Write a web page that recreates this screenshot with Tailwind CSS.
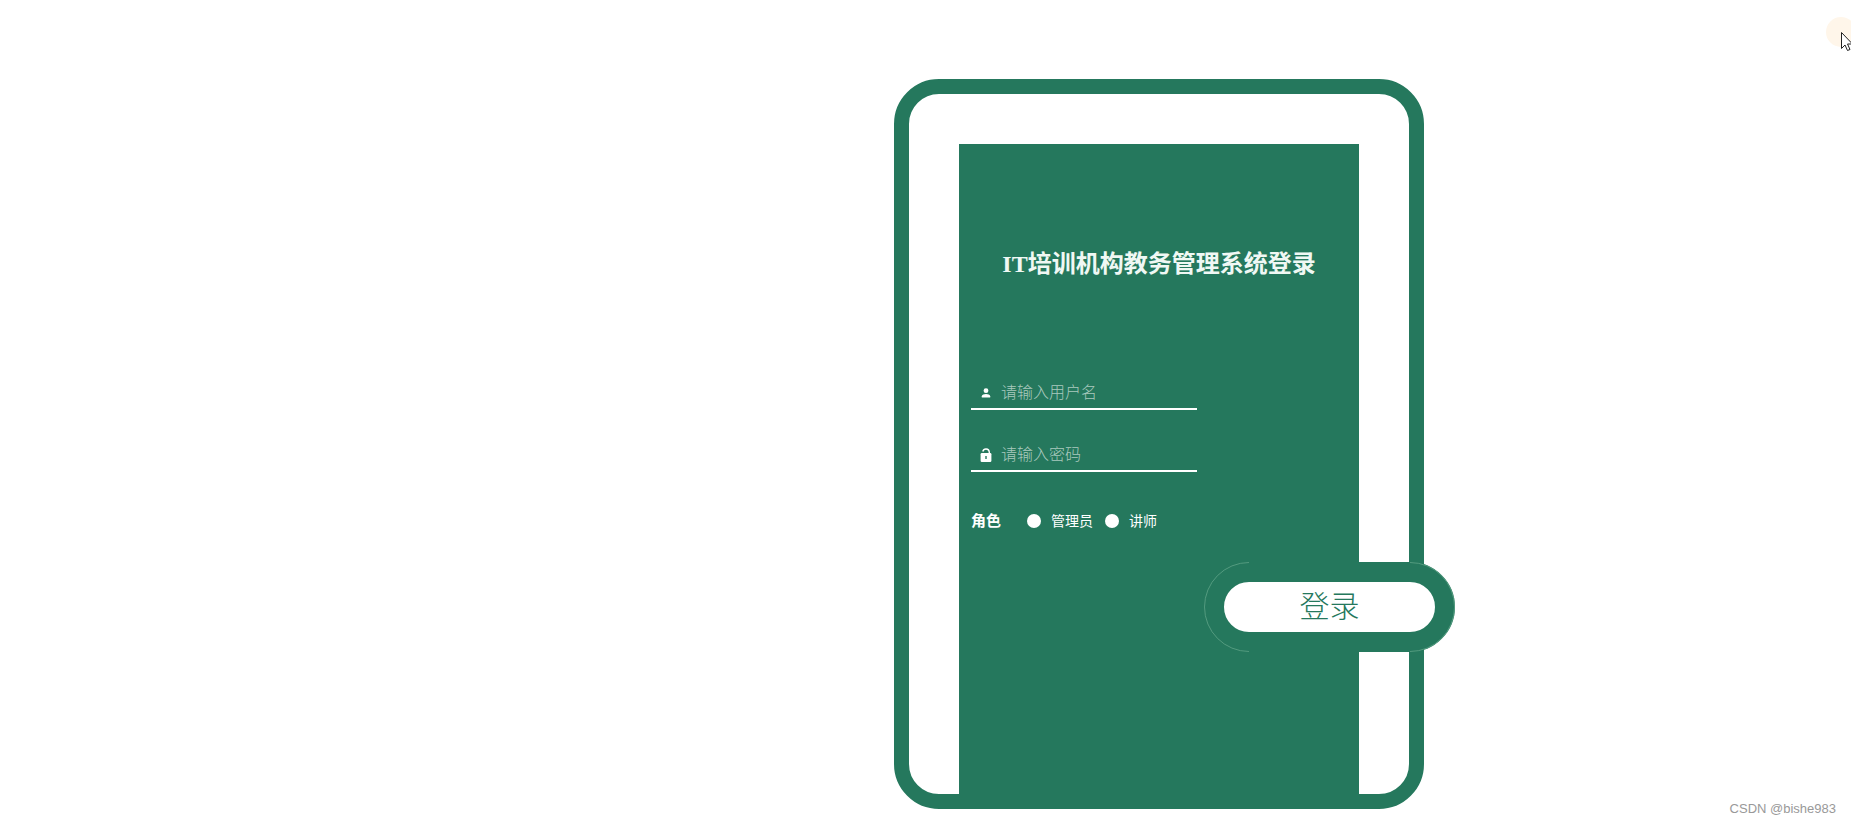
<!DOCTYPE html>
<html lang="zh-CN">
<head>
    <meta charset="UTF-8">
    <meta name="viewport" content="width=device-width, initial-scale=1.0">
    <title>IT培训机构教务管理系统登录</title>
    <script src="https://cdn.jsdelivr.net/npm/@tailwindcss/browser@4"></script>
    <style>
        body {
            font-family: "Liberation Sans", "Noto Sans CJK SC", sans-serif;
        }
        .title {
            font-family: "Liberation Serif", "Noto Sans CJK SC", serif;
        }
    </style>
</head>
<body class="relative min-h-screen overflow-x-hidden bg-white">

    <main class="flex justify-end pt-[79px] pb-3 pr-[427px]">
        <div class="w-[530px] rounded-[45px] border-[15px] border-[#25785d] bg-white px-[50px] pt-[50px]">
            <form class="relative min-h-[650px] bg-[#25785d] px-3 text-white">
                <h1 class="title pt-[104px] text-center text-2xl leading-8 font-bold text-[#f0f8f4]">IT培训机构教务管理系统登录</h1>

                <div class="mt-[91px] flex h-[39px] w-[226px] items-center border-b-2 border-white pt-[6px]">
                    <label for="username" class="flex w-[30px] shrink-0 justify-center" aria-label="用户名">
                        <svg class="size-5" viewBox="0 0 20 20" fill="currentColor">
                            <circle cx="10" cy="7.7" r="2.4"/>
                            <path d="M5.8 14.5v-1.2c0-1.6 2.4-2.4 4.2-2.4s4.2.8 4.2 2.4v1.2z"/>
                        </svg>
                    </label>
                    <input id="username" type="text" placeholder="请输入用户名" class="w-full min-w-0 bg-transparent text-base font-light outline-none placeholder:text-[#a9c9be]">
                </div>

                <div class="mt-[23px] flex h-[39px] w-[226px] items-center border-b-2 border-white pt-[6px]">
                    <label for="password" class="flex w-[30px] shrink-0 justify-center" aria-label="密码">
                        <svg class="size-5" viewBox="0 0 20 20" fill="none">
                            <path d="M6.8 6.5a3.3 3.3 0 0 1 6.5.5v1.5" stroke="currentColor" stroke-width="1.4"/>
                            <rect x="4.6" y="8" width="10.8" height="9" rx="1.2" fill="currentColor"/>
                            <path d="M10 11v3" stroke="#25785d" stroke-width="1.4"/>
                        </svg>
                    </label>
                    <input id="password" type="password" placeholder="请输入密码" class="w-full min-w-0 bg-transparent text-base font-light outline-none placeholder:text-[#a9c9be]">
                </div>

                <fieldset class="mt-[37px] flex h-6 items-center text-sm">
                    <legend class="float-left w-[56px] text-[15px] leading-6 font-bold">角色</legend>
                    <label class="mr-3 flex items-center gap-[10px]">
                        <input type="radio" name="role" value="admin" class="size-[14px] appearance-none rounded-full bg-white checked:border-4 checked:border-blue-600">管理员
                    </label>
                    <label class="flex items-center gap-[10px]">
                        <input type="radio" name="role" value="teacher" class="size-[14px] appearance-none rounded-full bg-white checked:border-4 checked:border-blue-600">讲师
                    </label>
                </fieldset>

                <!-- hangs over the right edge of the frame -->
                <button type="submit" class="absolute top-[418px] right-[-96px] h-[90px] w-[251px] rounded-[45px] border-[20px] border-[#25785d] bg-white text-3xl font-light text-[#25785d]">
                    登录
                    <svg class="pointer-events-none absolute -top-5 -left-5 h-[90px] w-[251px]" viewBox="0 0 251 90" fill="none" stroke="#5fa388" stroke-width="0.8" aria-hidden="true">
                        <path d="M45 .5a44.5 44.5 0 0 0 0 89M206 .5a44.5 44.5 0 0 1 0 89"/>
                    </svg>
                </button>
            </form>
        </div>
    </main>

    <div class="absolute right-[15px] bottom-1 text-[13px] leading-5 text-[#999]">CSDN @bishe983</div>

    <svg class="pointer-events-none absolute top-4 right-0 h-[40px] w-[25px]" viewBox="0 0 25 40">
        <circle cx="15" cy="16" r="15" fill="#fff6ea"/>
        <path d="M15.5 16.5v16l3.5-3.5 2.5 5.5 2.5-1-2.5-5.5h5z" fill="#fff" stroke="#222"/>
    </svg>
</body>
</html>
